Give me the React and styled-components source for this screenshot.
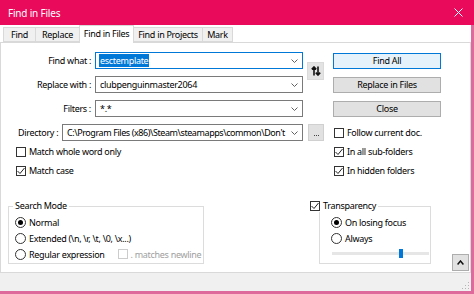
import React from "react";
import styled, { createGlobalStyle } from "styled-components";

const GlobalStyle = createGlobalStyle`
  html, body {
    margin: 0;
    padding: 0;
    background: #fff;
  }
  body {
    font-family: "Noto Sans", "Open Sans", sans-serif;
    font-size: 9px;
    letter-spacing: -0.3px;
    color: #000;
    overflow: hidden;
  }
  #root {
    width: 474px;
    height: 294px;
  }
  * {
    box-sizing: border-box;
  }
`;

const Window = styled.div`
  width: 474px;
  height: 294px;
  display: flex;
  flex-direction: column;
`;

const TitleBar = styled.div`
  flex: none;
  height: 25px;
  background: #ea0a5c;
  display: flex;
  align-items: center;
  justify-content: space-between;
  padding: 0 11px 0 8px;
`;

const Title = styled.span`
  color: #fff;
  font-size: 10px;
  letter-spacing: -0.2px;
`;

const Frame = styled.div`
  flex: 1;
  min-height: 0;
  display: flex;
  flex-direction: column;
  background: #fff;
  border-right: 3px solid #de6a9c;
  border-bottom: 3px solid #de6a9c;
`;

const TabStrip = styled.div`
  flex: none;
  height: 17px;
  display: flex;
  align-items: flex-end;
  padding-left: 3px;
  position: relative;
  z-index: 1;
`;

const Tab = styled.div`
  width: ${(p) => p.$w}px;
  height: ${(p) => (p.$active ? 18 : 15)}px;
  margin-left: ${(p) => (p.$first ? 0 : -1)}px;
  margin-bottom: ${(p) => (p.$active ? -1 : 0)}px;
  background: ${(p) => (p.$active ? "#fff" : "#f0f0f0")};
  border: 1px solid #d9d9d9;
  border-bottom: ${(p) => (p.$active ? "none" : "1px solid #d9d9d9")};
  position: relative;
  z-index: ${(p) => (p.$active ? 2 : 1)};
  display: flex;
  align-items: center;
  justify-content: center;
  padding-bottom: ${(p) => (p.$active ? 2 : 0)}px;
  white-space: nowrap;
`;

const Panel = styled.div`
  flex: 1;
  min-height: 0;
  background: #fff;
  border: 1px solid #d9d9d9;
  display: flex;
  flex-direction: column;
`;

const StatusStrip = styled.div`
  flex: none;
  height: 18px;
  background: #f0f0f0;
  display: flex;
  justify-content: flex-end;
  align-items: flex-end;
  padding: 0 1px 1px 0;
`;

const FieldGrid = styled.div`
  margin-top: 9px;
  display: grid;
  grid-template-columns: 94px 212px 26px 1fr;
  grid-template-rows: repeat(4, 17px);
  row-gap: 7px;
  align-items: center;
`;

const FieldLabel = styled.label`
  text-align: right;
  padding-right: 4px;
  white-space: nowrap;
`;

const DirCell = styled.div`
  grid-column: 1 / 3;
  display: flex;
  align-items: center;
  justify-content: space-between;
  padding: 0 4px 0 17px;
`;

const Combo = styled.div`
  width: ${(p) => p.$w || 208}px;
  height: 17px;
  border: 1px solid ${(p) => (p.$focused ? "#0078d7" : "#7a7a7a")};
  background: #fff;
  display: flex;
  align-items: center;
  padding: 0 4px 0 2px;
  overflow: hidden;
`;

const ComboText = styled.span`
  flex: 1;
  min-width: 0;
  overflow: hidden;
  white-space: nowrap;
  padding-left: 2px;
  letter-spacing: ${(p) => (p.$tight ? "-0.42px" : "inherit")};
`;

const Selected = styled.span`
  background: #0078d7;
  color: #fff;
  padding: 1px;
  margin-left: -1px;
`;

const Chevron = styled.svg`
  flex: none;
  margin-left: 2px;
`;

const SwapButton = styled.div`
  grid-column: 3;
  grid-row: 1 / 3;
  align-self: start;
  margin-top: 10px;
  width: 17px;
  height: 18px;
  background: #e3e3e3;
  border: 1px solid #dadada;
  display: flex;
  align-items: center;
  justify-content: center;
`;

const BrowseButton = styled.div`
  grid-column: 3;
  width: 16px;
  height: 17px;
  margin-left: 1px;
  background: #e1e1e1;
  border: 1px solid #d0d0d0;
  display: flex;
  align-items: flex-end;
  justify-content: center;
  gap: 1px;
  padding-bottom: 4px;
`;

const Dot = styled.span`
  width: 1px;
  height: 1px;
  background: #444;
`;

const Button = styled.div`
  grid-column: 4;
  width: 108px;
  height: 16px;
  background: ${(p) => (p.$default ? "#e5f1fb" : "#e1e1e1")};
  border: 1px solid ${(p) => (p.$default ? "#0078d7" : "#adadad")};
  display: flex;
  align-items: center;
  justify-content: center;
  white-space: nowrap;
`;

const OptionsGrid = styled.div`
  margin-top: 1px;
  display: grid;
  grid-template-columns: 318px 1fr;
  grid-template-rows: repeat(2, 19px);
  padding-left: 15px;
  align-items: center;
`;

const CheckRow = styled.label`
  display: flex;
  align-items: center;
  gap: 3px;
  white-space: nowrap;
  color: ${(p) => (p.$disabled ? "#a0a0a0" : "#000")};
  margin-left: ${(p) => p.$ml || 0}px;
`;

const Box = styled.span`
  flex: none;
  width: 10px;
  height: 10px;
  border: 1px solid ${(p) => (p.$disabled ? "#cccccc" : "#333")};
  background: #fff;
  display: flex;
  align-items: center;
  justify-content: center;
`;

const Round = styled.span`
  flex: none;
  width: 11px;
  height: 11px;
  border-radius: 50%;
  border: 1px solid #333;
  background: #fff;
  display: flex;
  align-items: center;
  justify-content: center;
  &::after {
    content: "";
    width: 5px;
    height: 5px;
    border-radius: 50%;
    background: ${(p) => (p.$checked ? "#000" : "transparent")};
  }
`;

const BottomRow = styled.div`
  margin-top: auto;
  height: 72px;
  display: flex;
  align-items: flex-start;
  padding-left: 7px;
`;

const Group = styled.fieldset`
  margin: 0;
  margin-left: ${(p) => p.$ml || 0}px;
  padding: 0;
  width: ${(p) => p.$w}px;
  height: 64px;
  border: 1px solid #dcdcdc;
`;

const Legend = styled.legend`
  padding: 0 2px 0 ${(p) => p.$pl ?? 2}px;
  margin-left: ${(p) => p.$ml}px;
  height: 12px;
  line-height: 12px;
  display: flex;
  align-items: center;
`;

const GroupBody = styled.div`
  padding: 2px 0 0 ${(p) => p.$pl}px;
  display: flex;
  flex-direction: column;
`;

const GroupRow = styled.div`
  height: ${(p) => p.$h || 16}px;
  display: flex;
  align-items: center;
`;

const Track = styled.div`
  position: relative;
  width: 97px;
  height: 3px;
  margin-left: 1px;
  background: #e6e6e6;
`;

const Thumb = styled.div`
  position: absolute;
  top: -3px;
  width: 4px;
  height: 9px;
  background: #0078d7;
`;

const CollapseButton = styled.div`
  align-self: flex-end;
  margin: 0 0 1px 21px;
  width: 17px;
  height: 17px;
  background: #e1e1e1;
  border: 1px solid #adadad;
  display: flex;
  align-items: center;
  justify-content: center;
`;

const CheckMark = () => (
  <svg width="8" height="8" viewBox="0 0 8 8">
    <polyline points="0.5,4 3,6.5 7.5,1" fill="none" stroke="#222" strokeWidth="1" />
  </svg>
);

const Check = ({ checked, disabled, ml, children }) => (
  <CheckRow $disabled={disabled} $ml={ml}>
    <Box $disabled={disabled}>{checked && <CheckMark />}</Box>
    {children}
  </CheckRow>
);

const Radio = ({ checked, children }) => (
  <CheckRow>
    <Round $checked={checked} />
    {children}
  </CheckRow>
);

const ComboArrow = () => (
  <Chevron width="7" height="4" viewBox="0 0 7 4">
    <polyline points="0.5,0.5 3.5,3.5 6.5,0.5" fill="none" stroke="#606060" strokeWidth="1" />
  </Chevron>
);

const tabs = [
  { label: "Find", w: 33 },
  { label: "Replace", w: 45 },
  { label: "Find in Files", w: 55, active: true },
  { label: "Find in Projects", w: 70 },
  { label: "Mark", w: 31 },
];

export default function App() {
  return (
    <>
      <GlobalStyle />
      <Window>
        <TitleBar>
          <Title>Find in Files</Title>
          <svg width="9" height="9" viewBox="0 0 9 9">
            <path d="M0.5 0.5 L8.5 8.5 M8.5 0.5 L0.5 8.5" stroke="#fff" strokeWidth="1" />
          </svg>
        </TitleBar>
        <Frame>
          <TabStrip>
            {tabs.map((t, i) => (
              <Tab key={t.label} $w={t.w} $active={t.active} $first={i === 0}>
                {t.label}
              </Tab>
            ))}
          </TabStrip>
          <Panel>
            <FieldGrid>
              <FieldLabel>Find what :</FieldLabel>
              <Combo $focused>
                <ComboText>
                  <Selected>esctemplate</Selected>
                </ComboText>
                <ComboArrow />
              </Combo>
              <SwapButton>
                <svg width="10" height="10" viewBox="0 0 10 10">
                  <path
                    d="M3 9.5 V1 M0.8 3.4 L3 1 L5.2 3.4 M7 0.5 V9 M4.8 6.6 L7 9 L9.2 6.6"
                    fill="none"
                    stroke="#111"
                    strokeWidth="1.6"
                  />
                </svg>
              </SwapButton>
              <Button $default>Find All</Button>

              <FieldLabel>Replace with :</FieldLabel>
              <Combo>
                <ComboText>clubpenguinmaster2064</ComboText>
                <ComboArrow />
              </Combo>
              <Button>Replace in Files</Button>

              <FieldLabel>Filters :</FieldLabel>
              <Combo>
                <ComboText>*.*</ComboText>
                <ComboArrow />
              </Combo>
              <Button>Close</Button>

              <DirCell>
                <span>Directory :</span>
                <Combo $w={241}>
                  <ComboText $tight>C:\Program Files (x86)\Steam\steamapps\common\Don't</ComboText>
                  <ComboArrow />
                </Combo>
              </DirCell>
              <BrowseButton aria-label="...">
                <Dot />
                <Dot />
                <Dot />
              </BrowseButton>
              <Check ml={1}>Follow current doc.</Check>
            </FieldGrid>

            <OptionsGrid>
              <Check>Match whole word only</Check>
              <Check checked>In all sub-folders</Check>
              <Check checked>Match case</Check>
              <Check checked>In hidden folders</Check>
            </OptionsGrid>

            <BottomRow>
              <Group $w={196}>
                <Legend $ml={4}>Search Mode</Legend>
                <GroupBody $pl={6}>
                  <GroupRow>
                    <Radio checked>Normal</Radio>
                  </GroupRow>
                  <GroupRow>
                    <Radio>Extended (\n, \r, \t, \0, \x...)</Radio>
                  </GroupRow>
                  <GroupRow>
                    <Radio>Regular expression</Radio>
                    <Check disabled ml={13}>. matches newline</Check>
                  </GroupRow>
                </GroupBody>
              </Group>

              <Group $w={112} $ml={115}>
                <Legend $ml={-10} $pl={0}>
                  <Check checked>Transparency</Check>
                </Legend>
                <GroupBody $pl={11}>
                  <GroupRow>
                    <Radio checked>On losing focus</Radio>
                  </GroupRow>
                  <GroupRow>
                    <Radio>Always</Radio>
                  </GroupRow>
                  <GroupRow $h={14}>
                    <Track>
                      <Thumb style={{ left: 67 }} />
                    </Track>
                  </GroupRow>
                </GroupBody>
              </Group>

              <CollapseButton>
                <svg width="7" height="5" viewBox="0 0 7 5">
                  <polyline points="0.6,4.4 3.5,1 6.4,4.4" fill="none" stroke="#111" strokeWidth="1.5" />
                </svg>
              </CollapseButton>
            </BottomRow>
          </Panel>
          <StatusStrip>
            <svg width="8" height="8" viewBox="0 0 8 8" fill="#b5b5b5">
              <rect x="6" y="0" width="1" height="1" />
              <rect x="3" y="3" width="1" height="1" />
              <rect x="6" y="3" width="1" height="1" />
              <rect x="0" y="6" width="1" height="1" />
              <rect x="3" y="6" width="1" height="1" />
              <rect x="6" y="6" width="1" height="1" />
            </svg>
          </StatusStrip>
        </Frame>
      </Window>
    </>
  );
}
